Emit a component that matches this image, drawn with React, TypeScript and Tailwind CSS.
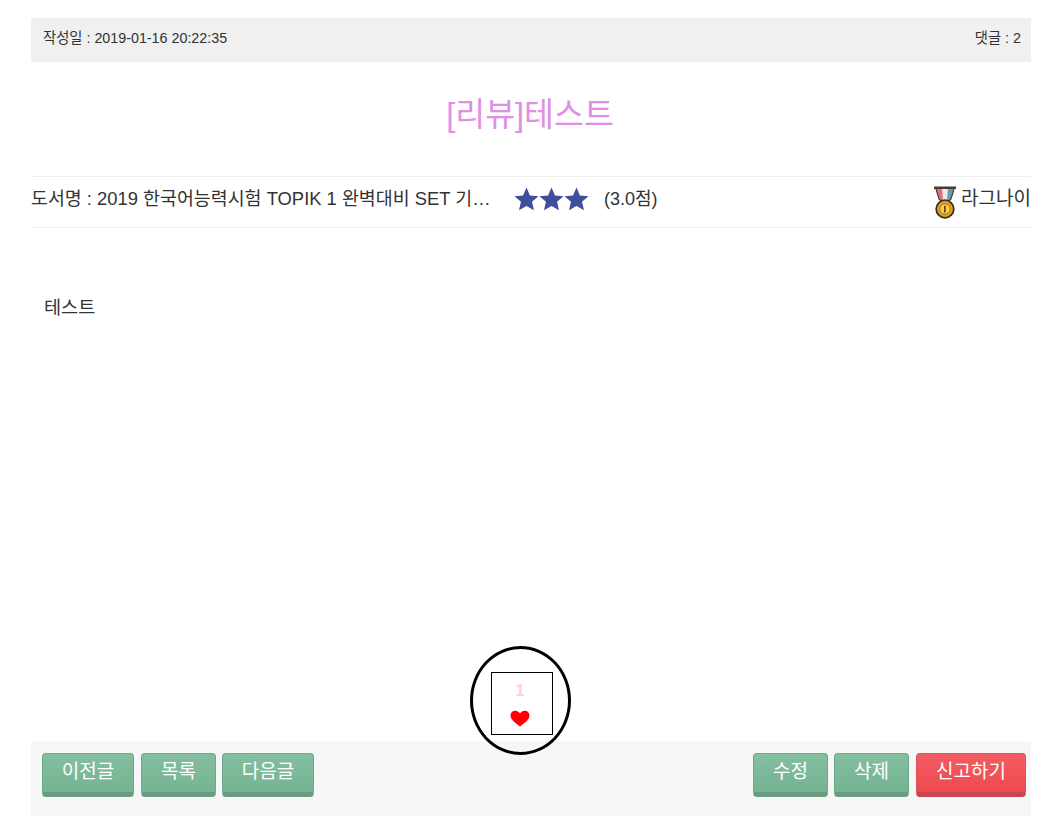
const font = { fontFamily: '"Liberation Sans", "Noto Sans CJK KR", sans-serif' };

function Star() {
  return (
    <svg width="25" height="24" viewBox="0 0 24 23">
      <path d="M12 0.5l3.3 7.6 8.2.7-6.2 5.4 1.9 8.1L12 18.1l-7.2 4.2 1.9-8.1L.5 8.8l8.2-.7z" fill="#3f4f9a" />
    </svg>
  );
}

function Medal() {
  return (
    <svg width="22" height="33" viewBox="0 0 22 33">
      <path d="M2 2h18l-3 11-3 3H8l-3-3z" fill="#eeeaea" />
      <path d="M2 2h6l1 13-3-1-1-2z" fill="#e0707f" />
      <path d="M14 2h6l-3 10-1 2-3 1z" fill="#5f9fb0" />
      <path d="M0 0.5h22v2.5H0z" fill="#4a3a34" />
      <path d="M2 3l3 10 3 3M20 3l-3 10-3 3" fill="none" stroke="#4a3a34" strokeWidth="1.2" />
      <circle cx="11" cy="23" r="8.8" fill="#e0a325" stroke="#3d2f22" strokeWidth="1.8" />
      <circle cx="11" cy="23" r="5.2" fill="#f7cf4c" stroke="#a8741a" strokeWidth="1" />
      <path d="M10 20.2l1.6-.7v7h-1.4v-5z" fill="#3d2a0c" />
    </svg>
  );
}

function Btn({ w, red, children }: { w: string; red?: boolean; children: string }) {
  return (
    <button
      className={
        red
          ? `${w} h-[44px] rounded-[4px] border border-[#d9565c] border-b-[5px] border-b-[#c8474e] bg-linear-to-b from-[#f25c62] to-[#ee4a50] pb-[2px] text-[19px] text-white`
          : `${w} h-[44px] rounded-[4px] border border-[#6ea88c] border-b-[5px] border-b-[#6a9c82] bg-linear-to-b from-[#84bf9f] to-[#75b393] pb-[2px] text-[19px] text-white`
      }
    >
      {children}
    </button>
  );
}

export default function App() {
  return (
    <div className="relative h-[819px] w-[1061px] bg-white pt-[18px] pl-[31px] text-[#333]" style={font}>
      <div className="flex h-[44px] w-[1000px] items-center justify-between bg-[#f0f0f0] pr-[10px] pb-[2px] pl-[12px] text-[14.3px]">
        <span>작성일 : 2019-01-16 20:22:35</span>
        <span>댓글 : 2</span>
      </div>

      <h1 className="flex h-[114px] w-[1000px] items-center justify-center pr-[2px] pb-[7px] text-[32.5px] font-normal text-[#e08fe4]">
        [리뷰]테스트
      </h1>

      <div className="flex h-[52px] w-[1000px] items-center border-y border-[#eeeeee] pb-[6px] text-[18.4px]">
        <span className="w-[461px] truncate">도서명 : 2019 한국어능력시험 TOPIK 1 완벽대비 SET 기본서와 문제집</span>
        <span className="ml-[22px] flex items-center">
          <Star />
          <Star />
          <Star />
        </span>
        <span className="ml-[15px] text-[18px]">(3.0점)</span>
        <span className="ml-auto flex items-center gap-[5px] text-[19px]">
          <span className="mt-[7px]">
            <Medal />
          </span>
          <span>라그나이</span>
        </span>
      </div>

      <div className="h-[513px] w-[1000px] pt-[68px] pl-[13px] text-[18.6px] leading-[24px]">테스트</div>

      <div className="flex h-[75px] w-[1000px] justify-between bg-[#f7f7f7] pt-[12px] pr-[5px] pl-[11px]">
        <div className="flex gap-[6px]">
          <Btn w="w-[92px] mr-px">이전글</Btn>
          <Btn w="w-[75px]">목록</Btn>
          <Btn w="w-[92px]">다음글</Btn>
        </div>
        <div className="flex gap-[6px]">
          <Btn w="w-[75px]">수정</Btn>
          <Btn w="w-[75px] mr-px">삭제</Btn>
          <Btn w="w-[110px]" red>
            신고하기
          </Btn>
        </div>
      </div>

      <div className="absolute top-[646px] left-[470px] flex h-[109px] w-[101px] items-center justify-center rounded-[50%] border-[3px] border-black">
        <div className="mt-[6px] ml-[2px] flex h-[63px] w-[62px] flex-col items-center border border-black pt-[8px] pr-[3px]">
          <span className="text-[16px] leading-[20px] font-bold text-[#fbcfe0]">1</span>
          <svg width="20" height="17" viewBox="0 0 20 17" className="mt-[9px]">
            <path d="M10 16.5C6 13 0.5 10 0.5 5.5 0.5 2.5 2.8 0.8 5.2 0.8 7.3 0.8 9 2 10 3.6 11 2 12.7 0.8 14.8 0.8 17.2 0.8 19.5 2.5 19.5 5.5 19.5 10 14 13 10 16.5z" fill="#ff0000" />
          </svg>
        </div>
      </div>
    </div>
  );
}
